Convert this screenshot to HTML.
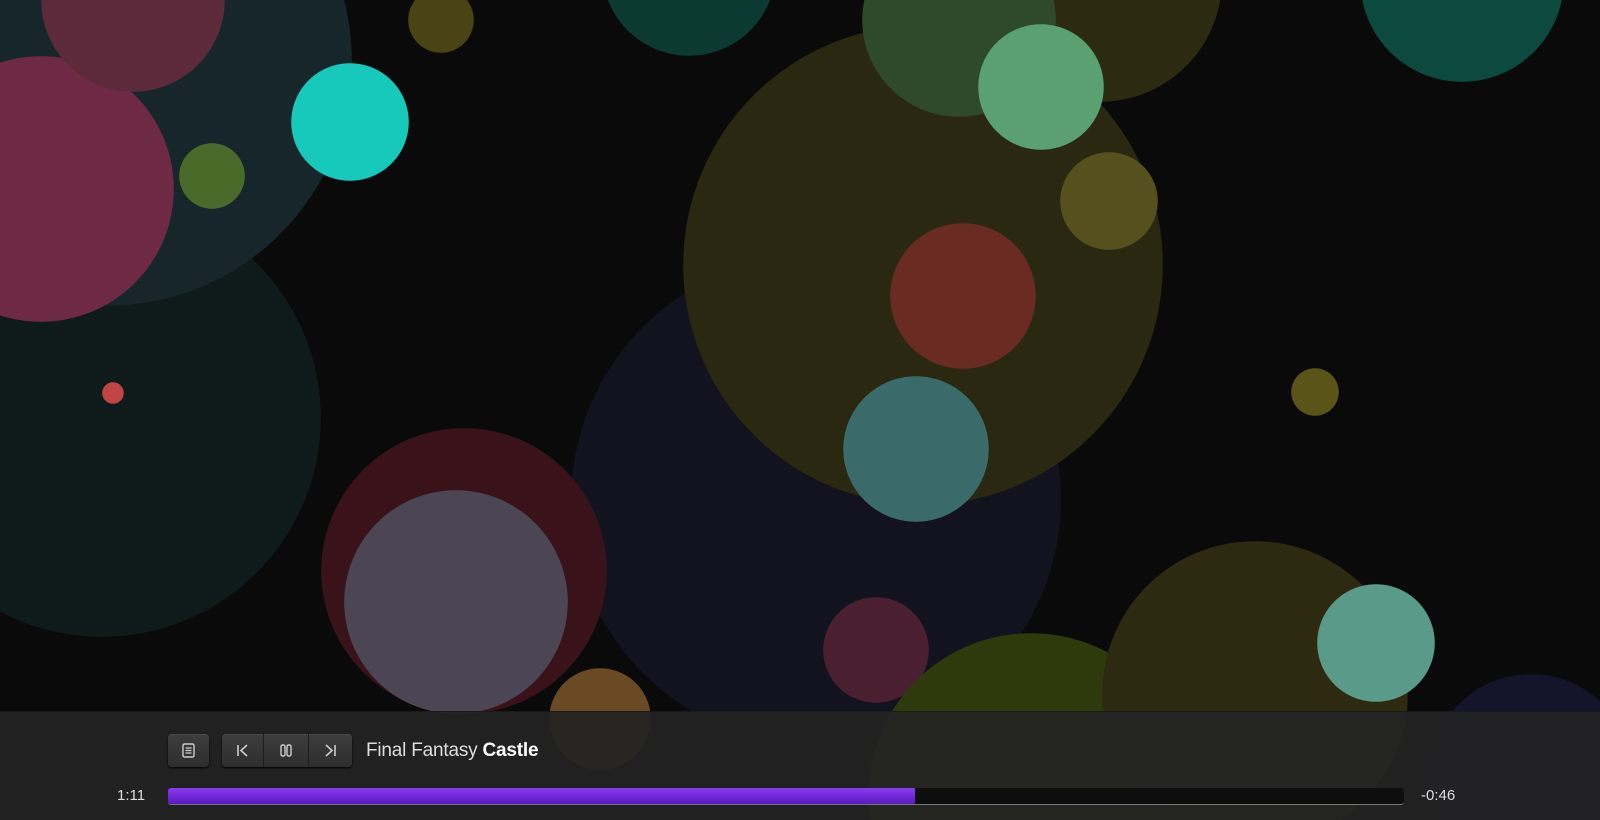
<!DOCTYPE html>
<html><head><meta charset="utf-8"><style>
*{box-sizing:border-box}
html,body{margin:0;padding:0;width:1600px;height:820px;overflow:hidden;background:#0a0a0a;font-family:"Liberation Sans",sans-serif;position:relative}
svg{display:block}
.bg{position:absolute;left:0;top:0;width:1600px;height:820px;background:
radial-gradient(circle 51px at 600px 719px,#6a4a22 50.5px,transparent 51px),
radial-gradient(circle 102px at 1531px 776px,#16142a 101.5px,transparent 102px),
radial-gradient(circle 102px at 1462px -20px,#0c4a40 101.5px,transparent 102px),
radial-gradient(circle 24px at 1315px 392px,#5a5418 23.5px,transparent 24px),
radial-gradient(circle 59px at 1376px 643px,#5a9a88 58.5px,transparent 59px),
radial-gradient(circle 153px at 1255px 694px,#2e2a12 152.5px,transparent 153px),
radial-gradient(circle 163px at 1031px 796px,#2e3a0c 162.5px,transparent 163px),
radial-gradient(circle 53px at 876px 650px,#4a2030 52.5px,transparent 53px),
radial-gradient(circle 112px at 456px 602px,#4b4554 111.5px,transparent 112px),
radial-gradient(circle 143px at 464px 571px,#3a121a 142.5px,transparent 143px),
radial-gradient(circle 73px at 916px 449px,#3a6a6a 72.5px,transparent 73px),
radial-gradient(circle 73px at 963px 296px,#6a2c22 72.5px,transparent 73px),
radial-gradient(circle 49px at 1109px 201px,#55501e 48.5px,transparent 49px),
radial-gradient(circle 63px at 1041px 87px,#5aa070 62.5px,transparent 63px),
radial-gradient(circle 97px at 959px 20px,#2e4a28 96.5px,transparent 97px),
radial-gradient(circle 122px at 1100px -20px,#2c2a10 121.5px,transparent 122px),
radial-gradient(circle 240px at 923px 265px,#2a2810 239.5px,transparent 240px),
radial-gradient(circle 245px at 816px 500px,#13121f 244.5px,transparent 245px),
radial-gradient(circle 87px at 689px -31px,#0c3a33 86.5px,transparent 87px),
radial-gradient(circle 11px at 113px 393px,#c04444 10.5px,transparent 11px),
radial-gradient(circle 33px at 441px 20px,#4a4414 32.5px,transparent 33px),
radial-gradient(circle 33px at 212px 176px,#4a6a2a 32.5px,transparent 33px),
radial-gradient(circle 59px at 350px 122px,#16c9bb 58.5px,transparent 59px),
radial-gradient(circle 92px at 133px 0px,#5c2a3a 91.5px,transparent 92px),
radial-gradient(circle 133px at 41px 189px,#6e2a45 132.5px,transparent 133px),
radial-gradient(circle 245px at 107px 61px,#16262a 244.5px,transparent 245px),
radial-gradient(circle 219px at 102px 418px,#0f1a1a 218.5px,transparent 219px),
#0a0a0a}
.bar{position:absolute;left:0;bottom:0;width:1600px;height:109px;background:rgba(35,35,35,0.93);border-top:1px solid #1a1a1a}
.btn{position:absolute;top:22px;height:33px;background:linear-gradient(#3d3d3d,#2e2e2e);border-radius:4px;box-shadow:0 1px 2px #000, inset 0 1px 0 #4a4a4a}
.seg{position:absolute;top:0;height:33px;border-right:1px solid #1e1e1e}
.title{position:absolute;left:366px;top:28px;color:#ddd;font-size:19px;letter-spacing:-0.2px}
.title b{color:#fff}
.time{position:absolute;top:75px;color:#ddd;font-size:15px}
.track{position:absolute;left:168px;top:76px;width:1236px;height:17px;background:#0e0e0e;border-radius:3px;border-bottom:1px solid #777;overflow:hidden}
.fill{position:absolute;left:0;top:0;width:747px;height:16px;background:linear-gradient(#8a3cf0,#5a18c0)}
</style></head><body>
<div class="bg"></div>
<div class="bar">
 <div class="btn" style="left:168px;width:41px">
  <svg width="41" height="33" viewBox="0 0 41 33"><rect x="15" y="10" width="11" height="13" rx="1.5" fill="none" stroke="#ccc" stroke-width="1.4"/><path d="M17.5 14h6M17.5 16.5h6M17.5 19h6" stroke="#ccc" stroke-width="1.2"/></svg>
 </div>
 <div class="btn" style="left:222px;width:130px">
  <div class="seg" style="left:0;width:42px"><svg width="41" height="33"><path d="M16 11v11M25 11l-6 5.5 6 5.5" fill="none" stroke="#ccc" stroke-width="1.6"/></svg></div>
  <div class="seg" style="left:42px;width:45px"><svg width="44" height="33"><rect x="17" y="11" width="4" height="11" rx="1.5" fill="none" stroke="#ccc" stroke-width="1.4"/><rect x="23" y="11" width="4" height="11" rx="1.5" fill="none" stroke="#ccc" stroke-width="1.4"/></svg></div>
  <div class="seg" style="left:87px;width:43px;border:none"><svg width="43" height="33"><path d="M17 11l6 5.5-6 5.5M26 11v11" fill="none" stroke="#ccc" stroke-width="1.6"/></svg></div>
 </div>
 <div class="title">Final Fantasy <b>Castle</b></div>
 <div class="time" style="left:117px">1:11</div>
 <div class="track"><div class="fill"></div></div>
 <div class="time" style="left:1421px">-0:46</div>
</div>
</body></html>
